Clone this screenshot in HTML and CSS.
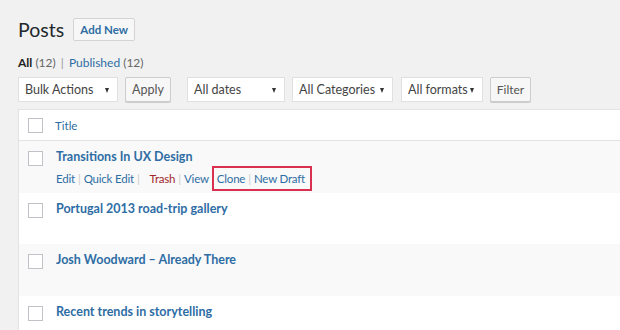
FILE: index.html
```html
<!DOCTYPE html>
<html>
<head>
<meta charset="utf-8">
<link rel="stylesheet" href="styles.css">
</head>
<body>
<div class="wrap">
  <div class="head">
    <h1 class="title">Posts</h1>
    <a class="add-new">Add New</a>
  </div>
  <div class="subsub"><b>All</b> <span class="count">(12)</span> <span class="sep">|</span> <a>Published</a> <span class="count">(12)</span></div>
  <div class="tablenav">
    <div class="group">
      <div class="select w-bulk">Bulk Actions</div>
      <div class="btn w-apply">Apply</div>
    </div>
    <div class="group">
      <div class="select w-dates">All dates</div>
      <div class="select w-cats">All Categories</div>
      <div class="select w-formats">All formats</div>
      <div class="btn w-filter">Filter</div>
    </div>
  </div>
  <div class="table">
    <div class="row header">
      <span class="cb"></span><span class="th">Title</span>
    </div>
    <div class="row alt">
      <span class="cb"></span>
      <div class="cell">
        <a class="post">Transitions In UX Design</a>
        <div class="actions">
          <a>Edit</a><span class="bar">|</span><a>Quick Edit</a><span class="bar">|</span><a class="trash">Trash</a><span class="bar">|</span><a>View</a><span class="hl"><a>Clone</a><span class="bar">|</span><a>New Draft</a></span>
        </div>
      </div>
    </div>
    <div class="row">
      <span class="cb"></span>
      <div class="cell"><a class="post">Portugal 2013 road-trip gallery</a></div>
    </div>
    <div class="row alt">
      <span class="cb"></span>
      <div class="cell"><a class="post">Josh Woodward – Already There</a></div>
    </div>
    <div class="row">
      <span class="cb"></span>
      <div class="cell"><a class="post">Recent trends in storytelling</a></div>
    </div>
  </div>
</div>
</body>
</html>
```
FILE: styles.css
```css
html, body { margin: 0; padding: 0; }
body {
  background: #f1f1f1;
  font-family: Lato, "Open Sans", sans-serif;
  font-size: 12px;
  color: #444;
  width: 620px;
  height: 330px;
  overflow: hidden;
}
.wrap { padding: 18px 0 0 18px; }
.head { display: flex; align-items: center; gap: 9px; height: 23px; }
.title { margin: 0; font-size: 19.5px; font-weight: 400; color: #23282d; line-height: 23px; }
.add-new {
  display: block; box-sizing: border-box; height: 23px; line-height: 21px; width: 62px; text-align: center;
  border: 1px solid #d4d4d4; background: #f7f7f7; color: #2e6da4;
  font-size: 11.5px; font-weight: 700; border-radius: 2px;
}
.subsub { margin-top: 14px; height: 16px; line-height: 16px; font-size: 12px; color: #666; }
.subsub b { color: #222; font-weight: 700; }
.subsub a { color: #2e6da4; }
.subsub .sep { color: #999; margin: 0 2px; }
.tablenav { display: flex; gap: 16px; margin-top: 6px; height: 25px; }
.group { display: flex; gap: 7px; }
.select {
  position: relative;
  box-sizing: border-box; height: 25px; line-height: 23px; padding-left: 6px;
  border: 1px solid #e0e0e0; background: #fff; color: #444; font-size: 12.5px;
}
.select::after {
  content: ""; position: absolute; right: 8px; top: 10px;
  border-left: 2.5px solid transparent; border-right: 2.5px solid transparent;
  border-top: 5px solid #333;
}
.w-bulk { width: 100px; }
.w-dates { width: 98px; }
.w-cats { width: 101px; }
.w-formats { width: 82px; }
.w-formats { margin-left: 1px; }
.btn {
  box-sizing: border-box; height: 25px; line-height: 23px; text-align: center;
  border: 1px solid #ccc; background: #f7f7f7; color: #555; border-radius: 2px;
  box-shadow: 0 1px 0 #ccc; font-size: 12.5px;
}
.w-apply { width: 46px; }
.w-filter { width: 41px; font-size: 12px; }
.table {
  margin-top: 7px; background: #fff;
  border: 1px solid #e3e3e3; border-right: none; border-bottom: none;
}
.row { display: flex; align-items: flex-start; height: 51.5px; box-sizing: border-box; }
.row.header { height: 31px; align-items: center; border-bottom: 1px solid #e3e3e3; }
.row.alt { background: #f9f9f9; }
.cb {
  box-sizing: border-box; width: 15px; height: 15px; margin-left: 9px; flex: none;
  border: 1px solid #bfc3c7; background: #fff;
}
.row:not(.header) .cb { margin-top: 10px; }
.th { margin-left: 12px; color: #2e6da4; font-size: 11.5px; }
.cell { margin-left: 13px; padding-top: 7px; }
.post { display: block; color: #2e6da4; font-weight: 700; font-size: 12.5px; line-height: 18px; }
.actions { display: flex; align-items: center; color: #2e6da4; font-size: 11.5px; letter-spacing: -0.2px; line-height: 15px; }
.actions .bar { color: #ccc; margin: 0 3px; }
.actions .trash { color: #a0282c; margin-left: 7px; }
.hl {
  display: flex; align-items: center; margin-left: 3px;
  border: 2px solid #d9304f; padding: 3px 5px 3px 3px;
}
```
